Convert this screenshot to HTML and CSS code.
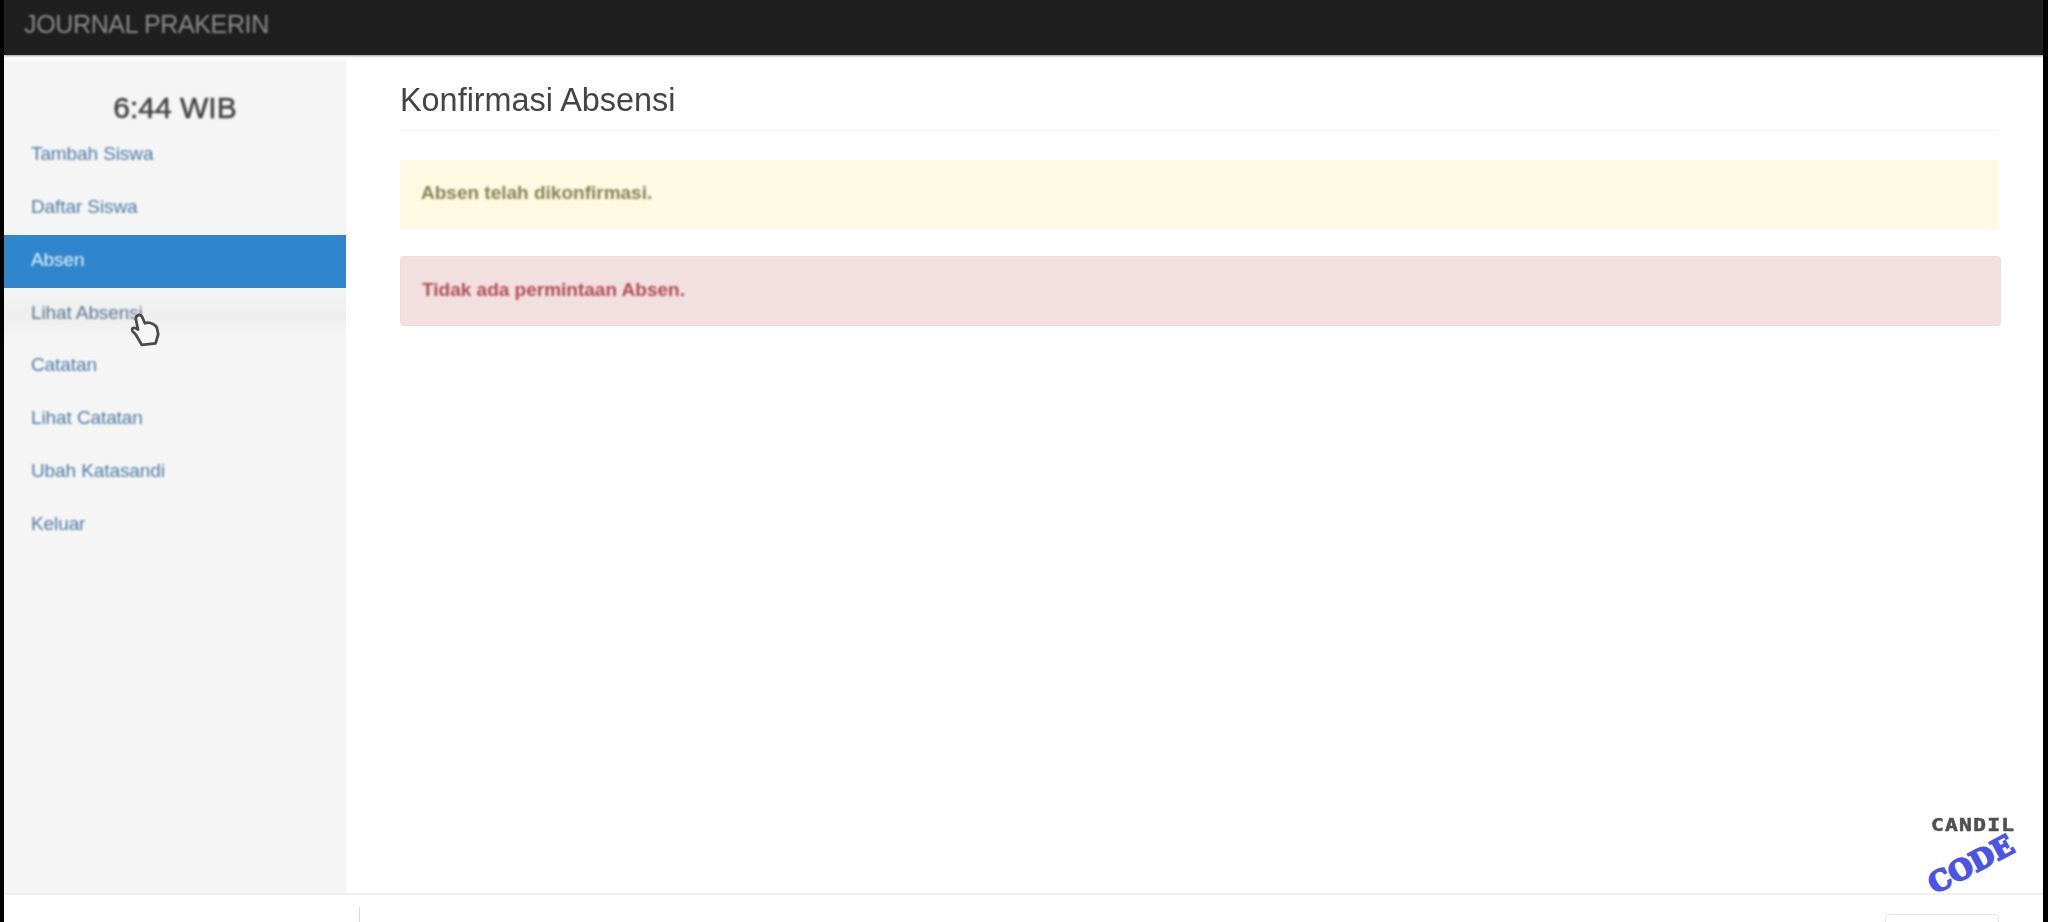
FILE: index.html
```html
<!DOCTYPE html>
<html lang="id">
<head>
<meta charset="utf-8">
<title>Journal Prakerin</title>
<link rel="stylesheet" href="styles.css">
</head>
<body>
<div class="screen">
  <header class="navbar"><a class="brand">JOURNAL PRAKERIN</a></header>
  <div class="workspace">
    <aside class="sidebar">
      <div class="clock">6:44 WIB</div>
      <nav class="menu">
        <a class="item"><span class="label">Tambah Siswa</span></a>
        <a class="item"><span class="label">Daftar Siswa</span></a>
        <a class="item active"><span class="label">Absen</span></a>
        <a class="item hover"><span class="label">Lihat Absensi</span>
          <svg class="cursor" viewBox="0 0 28 32" width="30" height="34" aria-hidden="true">
            <path d="M6 2.500c1.600-1.200 3.600-.5 4.400 1.200l2.600 6c1.800-.8 3.600-.9 5.200-.3 3 .9 5 2.300 6 4.300l1.300 6.300-2.500 8.500-13 1.500-5.500-9.500c-.9-1.300-2.700-2.500-3.500-4-.6-1.200.2-2.500 1.500-2.500 1.200 0 2.700.7 4 1.600L4.700 7c-.6-1.700-.1-3.500 1.300-4.500z" fill="#f6f6f6" stroke="#4a4a4a" stroke-width="2.600" stroke-linejoin="round"/>
          </svg>
        </a>
        <a class="item low"><span class="label">Catatan</span></a>
        <a class="item low"><span class="label">Lihat Catatan</span></a>
        <a class="item low"><span class="label">Ubah Katasandi</span></a>
        <a class="item low"><span class="label">Keluar</span></a>
      </nav>
    </aside>
    <main class="content">
      <h1 class="title">Konfirmasi Absensi</h1>
      <div class="alert warning"><span class="label">Absen telah dikonfirmasi.</span></div>
      <div class="alert danger"><span class="label">Tidak ada permintaan Absen.</span></div>
    </main>
  </div>
  <footer class="footer">
    <span class="divider"></span>
    <span class="button"></span>
  </footer>
  <div class="watermark">
    <span class="candil">CANDIL</span>
    <span class="code">CODE</span>
  </div>
</div>
</body>
</html>
```
FILE: styles.css
```css
* { box-sizing: border-box; }
html, body { margin: 0; height: 100%; background: #000; overflow: hidden; }
body { font-family: "Liberation Sans", Arial, sans-serif; }
.screen {
  position: relative;
  height: 922px;
  margin: 0 5px 0 4px;
  display: flex;
  flex-direction: column;
  background: #fff;
  overflow: hidden;
}
.navbar {
  flex: none;
  height: 55px;
  background: #1f1f1f;
  display: flex;
  align-items: center;
  padding: 0 0 7px 20px;
  box-shadow: 0 1px 2px rgba(0,0,0,.4);
}
.brand { font-size: 25px; letter-spacing: -.35px; color: #8c8c8c; filter: blur(.8px); }
.workspace { flex: none; height: 838px; display: flex; padding-top: 5px; }
.sidebar {
  flex: none;
  width: 342px;
  background: #f5f5f5;
  padding-top: 27px;
}
.clock {
  height: 42px;
  text-align: center;
  font-size: 30px;
  line-height: 42px;
  color: #444;
  -webkit-text-stroke: .6px #444;
  filter: blur(.8px);
}
.menu { display: flex; flex-direction: column; }
.item {
  position: relative;
  height: 53px;
  padding-left: 27px;
  font-size: 19px;
  letter-spacing: -.1px;
  line-height: 50px;
  color: #4d7ba6;
}
.item.low { line-height: 48px; }
.label { filter: blur(.8px); display: inline-block; }
.item.active { background: #2f86cd; color: #e9f3fb; }
.item.hover { background: linear-gradient(#f4f4f4, #eeeeee 55%, #f5f5f5); color: #5a7592; }
.cursor { position: absolute; left: 127px; top: 25px; filter: blur(.7px); }
.content { flex: 1; padding: 0 45px 0 54px; }
.title {
  margin: 0;
  height: 71px;
  padding-top: 20px;
  border-bottom: 1px solid #f3f3f3;
  font-size: 32.4px;
  line-height: 40px;
  font-weight: 400;
  color: #444;
  filter: blur(.6px);
}
.alert {
  height: 70px;
  padding-left: 21px;
  font-size: 19px;
  font-weight: 700;
  line-height: 65px;
}
.warning { margin-top: 29px; background: #fdf9e3; color: #8a7f55; }
.danger {
  margin: 26px -3px 0 0;
  background: #f2dfdf;
  color: #b04a55;
  border-radius: 4px;
  border: 1px solid #ebdcdc;
}
.footer {
  position: relative;
  flex: 1;
  background: #fff;
  border-top: 2px solid #f0f0f0;
}
.divider { position: absolute; left: 355px; top: 12px; bottom: 0; width: 1px; background: #d8d8d8; }
.button {
  position: absolute;
  right: 44px;
  top: 19px;
  width: 114px;
  height: 40px;
  border: 1px solid #e4e4e4;
  border-radius: 4px;
}
.watermark { position: absolute; left: 1918px; top: 812px; width: 100px; height: 90px; }
.candil {
  position: absolute;
  left: 9px;
  top: 3px;
  font-family: "DejaVu Sans Mono", monospace;
  font-size: 17px;
  font-weight: 700;
  letter-spacing: 1px;
  color: #505050;
  -webkit-text-stroke: .5px #505050;
  transform: scaleX(1.25);
  transform-origin: left center;
  filter: blur(.4px);
}
.code {
  position: absolute;
  left: 3px;
  top: 36px;
  font-family: "DejaVu Serif", serif;
  font-size: 28px;
  font-weight: 700;
  color: #4a55e8;
  -webkit-text-stroke: 1.8px #4a55e8;
  transform: rotate(-28deg);
  transform-origin: center;
}
```
